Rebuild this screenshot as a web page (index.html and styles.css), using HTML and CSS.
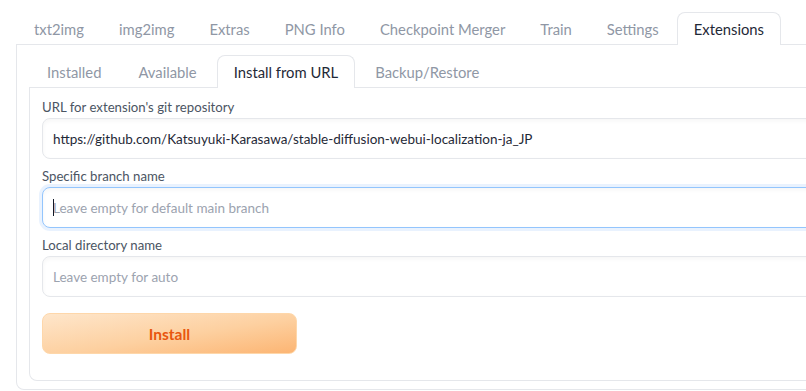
FILE: index.html
```html
<!DOCTYPE html>
<html lang="en">
<head>
<meta charset="utf-8">
<title>Extensions</title>
<link rel="stylesheet" href="styles.css">
</head>
<body>
<div class="app">
  <nav class="tabs top">
    <button class="tab">txt2img</button>
    <button class="tab">img2img</button>
    <button class="tab">Extras</button>
    <button class="tab">PNG Info</button>
    <button class="tab">Checkpoint Merger</button>
    <button class="tab">Train</button>
    <button class="tab">Settings</button>
    <button class="tab active">Extensions</button>
  </nav>
  <div class="panel outer">
    <nav class="tabs inner-tabs">
      <button class="tab">Installed</button>
      <button class="tab">Available</button>
      <button class="tab active">Install from URL</button>
      <button class="tab">Backup/Restore</button>
    </nav>
    <div class="panel inner">
      <div class="field">
        <label class="label">URL for extension's git repository</label>
        <input class="input" type="text" value="https://github.com/Katsuyuki-Karasawa/stable-diffusion-webui-localization-ja_JP">
      </div>
      <div class="field">
        <label class="label">Specific branch name</label>
        <div class="input-wrap">
          <input class="input focused" type="text" placeholder="Leave empty for default main branch">
          <span class="caret"></span>
        </div>
      </div>
      <div class="field">
        <label class="label">Local directory name</label>
        <input class="input" type="text" placeholder="Leave empty for auto">
      </div>
      <button class="btn">Install</button>
    </div>
  </div>
</div>
</body>
</html>
```
FILE: styles.css
```css
html, body {
  margin: 0;
  padding: 0;
  overflow: hidden;
  background: #ffffff;
}
body {
  font-family: Lato, "Liberation Sans", sans-serif;
  color: #1f2937;
}
.app {
  padding: 12px 0 0 16px;
  width: 1100px;
}
.tabs {
  display: flex;
  gap: 3px;
  padding-left: 1px;
  border-bottom: 1px solid #e5e7eb;
}
.tabs.top {
  gap: 1px;
}
.tab {
  font-family: inherit;
  font-size: 14.8px;
  line-height: 24px;
  padding: 4px 16px;
  margin: 0 0 -1px 0;
  background: transparent;
  color: #8f97a5;
  border: 1px solid transparent;
  border-bottom: none;
  border-radius: 8px 8px 0 0;
  cursor: pointer;
}
.tab.active {
  background: #ffffff;
  color: #1f2937;
  border-color: #e5e7eb;
}
.panel {
  border: 1px solid #e5e7eb;
  border-top: none;
  border-radius: 0 0 8px 8px;
}
.outer {
  padding: 10px 0 8px 12px;
}
.inner {
  padding: 9px 12px 26px 12px;
  display: flex;
  flex-direction: column;
  align-items: flex-start;
}
.field {
  display: flex;
  flex-direction: column;
  align-self: stretch;
  margin-bottom: 7px;
}
.label {
  font-size: 13.2px;
  line-height: 20px;
  color: #4b5563;
  margin-bottom: 1px;
}
.input-wrap {
  position: relative;
  display: block;
}
.input {
  display: block;
  width: 100%;
  box-sizing: border-box;
  height: 41px;
  margin: 0;
  padding: 0 10px;
  font-family: inherit;
  font-size: 13.5px;
  color: #1f2937;
  border: 1px solid #e5e7eb;
  border-radius: 8px;
  background: #ffffff;
  box-shadow: inset 0 2px 4px rgba(0, 0, 0, 0.04);
  outline: none;
}
.input::placeholder {
  color: #9ca3af;
}
.input.focused {
  border-color: #93c5fd;
  box-shadow: 0 0 0 3px rgba(219, 234, 254, 0.6), inset 0 2px 4px rgba(0, 0, 0, 0.04);
}
.caret {
  position: absolute;
  left: 11px;
  top: 12px;
  width: 1px;
  height: 17px;
  background: #111827;
}
.btn {
  margin-top: 9px;
  width: 255px;
  height: 41px;
  box-sizing: border-box;
  border: 1px solid #fed7aa;
  border-radius: 8px;
  background: linear-gradient(to bottom right, #fee6cb, #fdd0a0 55%, #fcb573);
  color: #e8560f;
  font-family: inherit;
  font-size: 15.5px;
  font-weight: 700;
  cursor: pointer;
}
```
